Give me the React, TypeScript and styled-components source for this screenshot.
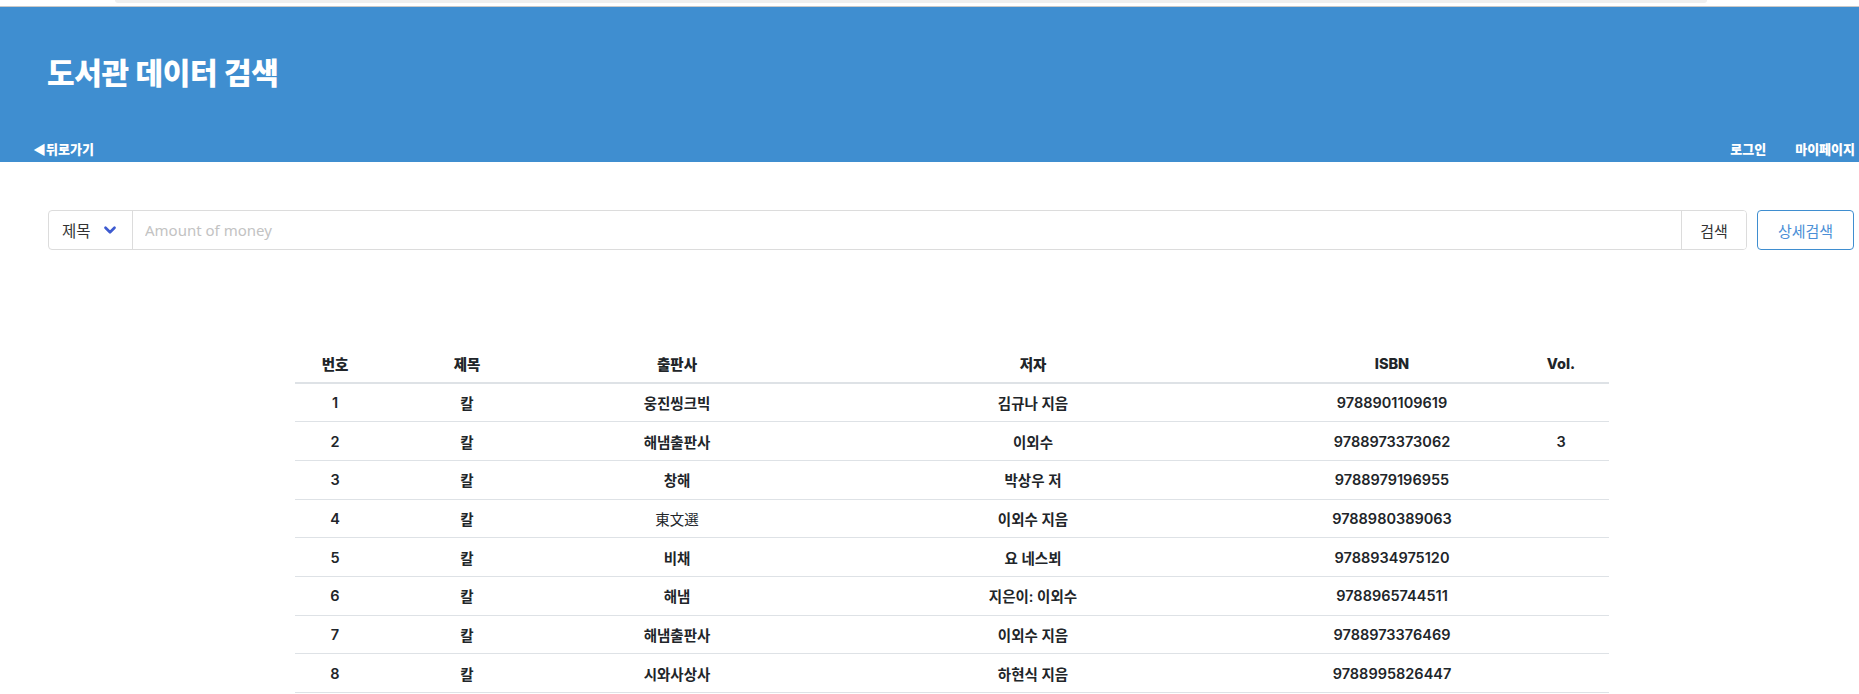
import React from 'react'
import styled, { createGlobalStyle } from 'styled-components'
import { ChevronDown } from 'lucide-react'

const GlobalStyle = createGlobalStyle`
  body {
    margin: 0;
    background: #fff;
    color: #212529;
    font-family: 'Noto Sans', 'Noto Sans CJK KR', sans-serif;
  }
  * { box-sizing: border-box; }
`

const TopStrip = styled.div`
  height: 7px;
  border-bottom: 1px solid #c9c9c9;
  padding: 0 152px 0 115px;
  .bar {
    height: 3px;
    background: #efefef;
    border-radius: 0 0 3px 3px;
  }
`

const Header = styled.header`
  background: #3f8ed0;
  color: #fff;
  display: grid;
  grid-template-rows: 128px 27px;
`

const TitleRow = styled.div`
  display: flex;
  align-items: center;
  padding-left: 47px;
  h1 {
    margin: 0;
    font-family: 'Noto Sans CJK KR', sans-serif;
    font-weight: 900;
    font-size: 30px;
    line-height: 1;
    letter-spacing: -0.3px;
  }
`

const NavRow = styled.nav`
  display: flex;
  align-items: center;
  justify-content: space-between;
  padding: 0 4px 0 33px;
  font-family: 'Noto Sans CJK KR', sans-serif;
  font-weight: 900;
  font-size: 13px;
`

const NavLinks = styled.div`
  display: flex;
  gap: 29px;
`

const NavLink = styled.a`
  color: #fff;
  text-decoration: none;
  cursor: pointer;
`

const Main = styled.main`
  padding: 48px 5px 0 48px;
`

const SearchRow = styled.div`
  display: flex;
  gap: 10px;
  height: 40px;
`

const InputGroup = styled.div`
  flex: 1;
  display: flex;
  border: 1px solid #dcdcdc;
  border-radius: 4px;
  overflow: hidden;
`

const Select = styled.div`
  width: 84px;
  display: flex;
  align-items: center;
  gap: 10px;
  padding-left: 13px;
  border-right: 1px solid #dcdcdc;
  font-size: 15.5px;
  color: #333;
  font-family: 'Noto Sans CJK KR', sans-serif;
  svg { color: #3e5bd0; }
`

const Input = styled.input`
  flex: 1;
  border: none;
  outline: none;
  padding: 0 12px;
  font-family: 'Noto Sans', sans-serif;
  font-size: 15px;
  &::placeholder { color: #c3c3c3; }
`

const SearchButton = styled.button`
  width: 65px;
  border: none;
  border-left: 1px solid #dcdcdc;
  background: #fff;
  font-family: 'Noto Sans CJK KR', sans-serif;
  font-size: 15px;
  color: #333;
`

const DetailButton = styled.button`
  width: 97px;
  border: 1px solid #3f8ed0;
  border-radius: 4px;
  background: #fff;
  color: #4b8fd6;
  font-family: 'Noto Sans CJK KR', sans-serif;
  font-size: 15px;
`

const Table = styled.table`
  margin: 95px 0 0 247px;
  width: 1314px;
  border-collapse: collapse;
  font-family: Inter, 'Noto Sans CJK KR', sans-serif;
  font-size: 14.5px;
  color: #212529;
  th {
    height: 38px;
    font-weight: 800;
    border-bottom: 2px solid #dee2e6;
    vertical-align: middle;
  }
  td {
    height: 38.7px;
    padding: 0;
    text-align: center;
    border-bottom: 1px solid #dee2e6;
    font-weight: 600;
  }
`

const Cell = styled.td<{ $plain?: boolean }>`
  && {
    font-weight: ${(p) => (p.$plain ? 400 : 600)};
    font-family: ${(p) => (p.$plain ? "'Noto Sans CJK JP', sans-serif" : 'inherit')};
  }
`

const columns = [
  { label: '번호', width: 80 },
  { label: '제목', width: 184 },
  { label: '출판사', width: 236 },
  { label: '저자', width: 476 },
  { label: 'ISBN', width: 242 },
  { label: 'Vol.', width: 96 },
]

const rows = [
  { no: 1, title: '칼', pub: '웅진씽크빅', author: '김규나 지음', isbn: '9788901109619', vol: '' },
  { no: 2, title: '칼', pub: '해냄출판사', author: '이외수', isbn: '9788973373062', vol: '3' },
  { no: 3, title: '칼', pub: '창해', author: '박상우 저', isbn: '9788979196955', vol: '' },
  { no: 4, title: '칼', pub: '東文選', author: '이외수 지음', isbn: '9788980389063', vol: '', plain: true },
  { no: 5, title: '칼', pub: '비채', author: '요 네스뵈', isbn: '9788934975120', vol: '' },
  { no: 6, title: '칼', pub: '해냄', author: '지은이: 이외수', isbn: '9788965744511', vol: '' },
  { no: 7, title: '칼', pub: '해냄출판사', author: '이외수 지음', isbn: '9788973376469', vol: '' },
  { no: 8, title: '칼', pub: '시와사상사', author: '하현식 지음', isbn: '9788995826447', vol: '' },
]

export default function App() {
  return (
    <>
      <GlobalStyle />
      <TopStrip>
        <div className='bar' />
      </TopStrip>
      <Header>
        <TitleRow>
          <h1>도서관 데이터 검색</h1>
        </TitleRow>
        <NavRow>
          <NavLink>◀뒤로가기</NavLink>
          <NavLinks>
            <NavLink>로그인</NavLink>
            <NavLink>마이페이지</NavLink>
          </NavLinks>
        </NavRow>
      </Header>
      <Main>
        <SearchRow>
          <InputGroup>
            <Select>
              제목
              <ChevronDown size={18} strokeWidth={3.6} />
            </Select>
            <Input placeholder='Amount of money' />
            <SearchButton>검색</SearchButton>
          </InputGroup>
          <DetailButton>상세검색</DetailButton>
        </SearchRow>
        <Table>
          <thead>
            <tr>
              {columns.map((c) => (
                <th key={c.label} style={{ width: c.width }}>
                  {c.label}
                </th>
              ))}
            </tr>
          </thead>
          <tbody>
            {rows.map((r) => (
              <tr key={r.no}>
                <td>{r.no}</td>
                <td>{r.title}</td>
                <Cell $plain={r.plain}>{r.pub}</Cell>
                <td>{r.author}</td>
                <td>{r.isbn}</td>
                <td>{r.vol}</td>
              </tr>
            ))}
          </tbody>
        </Table>
      </Main>
    </>
  )
}
